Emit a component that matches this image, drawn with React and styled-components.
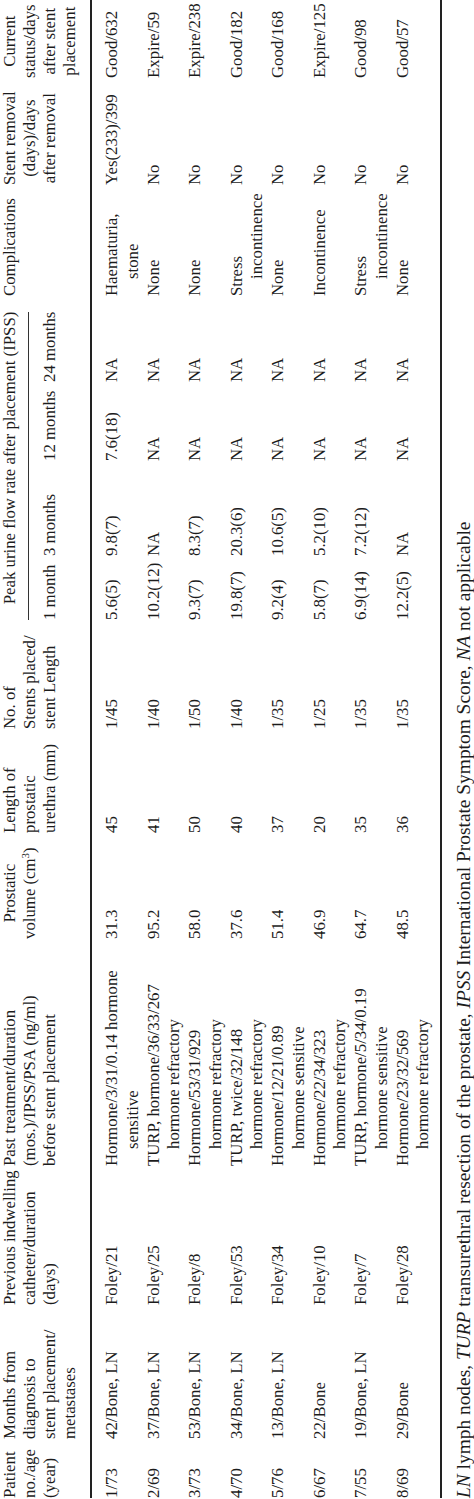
import React from "react";
import styled, { createGlobalStyle } from "styled-components";

const TABLE_W = 1505;
const GRID =
  "59px 134px 139px 227px 106px 104px 109px 64px 95px 79px 86px 111px 107px 85px";

const GlobalStyle = createGlobalStyle`
  html, body { margin: 0; padding: 0; background: #fff; }
  body { font-family: "Liberation Serif", "Times New Roman", serif; color: #1c1c1c; }
`;

const Viewport = styled.div`
  width: 474px;
  height: 1499px;
  overflow: hidden;
  background: #fff;
`;

const Sheet = styled.div`
  width: ${TABLE_W}px;
  height: 474px;
  transform-origin: 0 0;
  transform: translate(0, 1498px) rotate(-90deg);
  font-size: 16.8px;
`;

const Head = styled.div`
  display: grid;
  grid-template-columns: ${GRID};
  grid-template-rows: repeat(4, 20px);
  height: 89.5px;
  line-height: 20px;
  border-bottom: 2px solid #222;
`;

const HeadCell = styled.div`
  grid-column: ${(p) => p.$col};
  grid-row: 1 / 5;
  white-space: nowrap;
`;

const HeadText = styled.span`
  display: inline-block;
  text-align: ${(p) => p.$align || "left"};
`;

const GroupTitle = styled.div`
  grid-column: 8 / 12;
  grid-row: 1;
  white-space: nowrap;
  text-align: center;
`;

const GroupRule = styled.div`
  grid-column: 8 / 12;
  grid-row: 2;
  align-self: start;
  height: 0;
  margin-top: 8px;
  border-top: 1.3px solid #333;
  margin-right: 16px;
`;

const SubHead = styled.div`
  grid-column: ${(p) => p.$col};
  grid-row: 3;
  white-space: nowrap;
`;

const Body = styled.div`
  padding: 10.5px 0 5.5px;
  border-bottom: 2px solid #222;
`;

const Row = styled.div`
  display: grid;
  grid-template-columns: ${GRID};
  height: 41.5px;
  line-height: 20.75px;
`;

const Cell = styled.div`
  white-space: nowrap;
`;

const Cont = styled.div`
  padding-left: ${(p) => (p.$indent != null ? p.$indent : 17)}px;
`;

const Note = styled.p`
  margin: 12.5px 0 0;
  font-size: 19.4px;
  line-height: 20px;
  white-space: nowrap;
`;

const Abbr = styled.i`
  font-style: italic;
`;

const Sup = styled.sup`
  font-size: 11px;
  line-height: 0;
  vertical-align: 6px;
`;

const rows = [
  ["1/73", "42/Bone, LN", "Foley/21", ["Hormone/3/31/0.14 hormone", "sensitive"], "31.3", "45", "1/45", "5.6(5)", "9.8(7)", "7.6(18)", "NA", ["Haematuria,", "stone"], "Yes(233)/399", "Good/632"],
  ["2/69", "37/Bone, LN", "Foley/25", ["TURP, hormone/36/33/267", "hormone refractory"], "95.2", "41", "1/40", "10.2(12)", "NA", "NA", "NA", "None", "No", "Expire/59"],
  ["3/73", "53/Bone, LN", "Foley/8", ["Hormone/53/31/929", "hormone refractory"], "58.0", "50", "1/50", "9.3(7)", "8.3(7)", "NA", "NA", "None", "No", "Expire/238"],
  ["4/70", "34/Bone, LN", "Foley/53", ["TURP, twice/32/148", "hormone refractory"], "37.6", "40", "1/40", "19.8(7)", "20.3(6)", "NA", "NA", ["Stress", "incontinence"], "No", "Good/182"],
  ["5/76", "13/Bone, LN", "Foley/34", ["Hormone/12/21/0.89", "hormone sensitive"], "51.4", "37", "1/35", "9.2(4)", "10.6(5)", "NA", "NA", "None", "No", "Good/168"],
  ["6/67", "22/Bone", "Foley/10", ["Hormone/22/34/323", "hormone refractory"], "46.9", "20", "1/25", "5.8(7)", "5.2(10)", "NA", "NA", "Incontinence", "No", "Expire/125"],
  ["7/55", "19/Bone, LN", "Foley/7", ["TURP, hormone/5/34/0.19", "hormone sensitive"], "64.7", "35", "1/35", "6.9(14)", "7.2(12)", "NA", "NA", ["Stress", "incontinence"], "No", "Good/98"],
  ["8/69", "29/Bone", "Foley/28", ["Hormone/23/32/569", "hormone refractory"], "48.5", "36", "1/35", "12.2(5)", "NA", "NA", "NA", "None", "No", "Good/57"],
];

const headers = [
  { col: 1, lines: ["Patient", "no./age", "(year)"] },
  { col: 2, lines: ["Months from", "diagnosis to", "stent placement/", "metastases"] },
  { col: 3, lines: ["Previous indwelling", "catheter/duration", "(days)"] },
  { col: 4, lines: ["Past treatment/duration", "(mos.)/IPSS/PSA (ng/ml)", "before stent placement"] },
  { col: 5, align: "center", lines: ["Prostatic", <>volume (cm<Sup>3</Sup>)</>] },
  { col: 6, lines: ["Length of", "prostatic", "urethra (mm)"] },
  { col: 7, lines: ["No. of", "Stents placed/", "stent Length"] },
  { col: 12, lines: ["Complications"] },
  { col: 13, align: "center", lines: ["Stent removal", "(days)/days", "after removal"] },
  { col: 14, align: "center", lines: ["Current", "status/days", "after stent", "placement"] },
];

const subHeads = ["1 month", "3 months", "12 months", "24 months"];

function CellContent({ value }) {
  if (Array.isArray(value)) {
    return (
      <>
        <div>{value[0]}</div>
        <Cont>{value[1]}</Cont>
      </>
    );
  }
  return value;
}

export default function App() {
  return (
    <>
      <GlobalStyle />
      <Viewport>
        <Sheet>
          <Head>
            {headers.map((h) => (
              <HeadCell key={h.col} $col={h.col}>
                <HeadText $align={h.align}>
                  {h.lines.map((l, i) => (
                    <React.Fragment key={i}>
                      {i > 0 && <br />}
                      {l}
                    </React.Fragment>
                  ))}
                </HeadText>
              </HeadCell>
            ))}
            <GroupTitle>Peak urine flow rate after placement (IPSS)</GroupTitle>
            <GroupRule />
            {subHeads.map((s, i) => (
              <SubHead key={s} $col={8 + i}>
                {s}
              </SubHead>
            ))}
          </Head>
          <Body>
            {rows.map((r, ri) => (
              <Row key={ri}>
                {r.map((v, ci) => (
                  <Cell key={ci}>
                    <CellContent value={v} />
                  </Cell>
                ))}
              </Row>
            ))}
          </Body>
          <Note>
            <Abbr>LN</Abbr> lymph nodes, <Abbr>TURP</Abbr> transurethral resection of the prostate,{" "}
            <Abbr>IPSS</Abbr> International Prostate Symptom Score, <Abbr>NA</Abbr> not applicable
          </Note>
        </Sheet>
      </Viewport>
    </>
  );
}
